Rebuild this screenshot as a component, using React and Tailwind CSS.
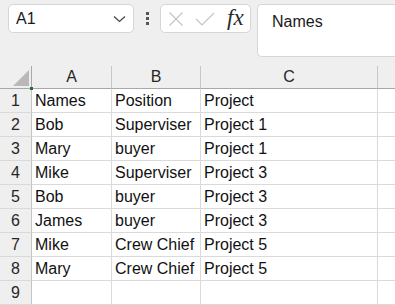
import React from 'react';

const rows = [
  ['Names', 'Position', 'Project'],
  ['Bob', 'Superviser', 'Project 1'],
  ['Mary', 'buyer', 'Project 1'],
  ['Mike', 'Superviser', 'Project 3'],
  ['Bob', 'buyer', 'Project 3'],
  ['James', 'buyer', 'Project 3'],
  ['Mike', 'Crew Chief', 'Project 5'],
  ['Mary', 'Crew Chief', 'Project 5'],
  ['', '', ''],
];

const gridCols = 'grid grid-cols-[32px_80px_89px_177px_1fr]';

function Toolbar() {
  return (
    <div className="flex items-start pt-[4px] h-[66px]">
      {/* name box */}
      <div className="ml-[8px] w-[126px] h-[29px] bg-white border border-[#d6d6d6] rounded-[5px] flex items-center justify-between pl-[7px] pr-[6px]">
        <span className="text-[16px] text-[#1a1a1a]">A1</span>
        <svg width="13" height="8" viewBox="0 0 13 8" className="mr-[1px]">
          <polyline points="1,1.5 6.5,6.5 12,1.5" fill="none" stroke="#444" strokeWidth="1.2" />
        </svg>
      </div>
      {/* dots */}
      <div className="w-[26px] h-[29px] flex flex-col items-center justify-center gap-[2px]">
        <span className="w-[3px] h-[3px] bg-[#555]" />
        <span className="w-[3px] h-[3px] bg-[#555]" />
        <span className="w-[3px] h-[3px] bg-[#555]" />
      </div>
      {/* cancel / enter / fx */}
      <div className="w-[91px] h-[29px] bg-white border border-[#d6d6d6] rounded-[5px] flex items-center pl-[7px]">
        <svg width="16" height="16" viewBox="0 0 16 16">
          <path d="M1.5 1.5 L14.5 14.5 M14.5 1.5 L1.5 14.5" stroke="#c4c4c4" strokeWidth="1.2" fill="none" />
        </svg>
        <svg width="20" height="14" viewBox="0 0 20 14" className="ml-[11px]">
          <polyline points="1,7 7,13 19,1" fill="none" stroke="#c4c4c4" strokeWidth="1.2" />
        </svg>
        <span className="ml-[12px] text-[23px] italic leading-none text-[#2b2b2b] font-['Liberation_Serif',serif] -mt-[3px]">fx</span>
      </div>
      {/* formula bar */}
      <div className="ml-[6px] flex-1 h-[53px] bg-white border border-[#d6d6d6] rounded-l-[5px] border-r-0 pl-[14px] pt-[5px]">
        <span className="text-[16px] text-[#1a1a1a]">Names</span>
      </div>
    </div>
  );
}

function Corner() {
  return (
    <div className="relative h-[23px] border-r border-b border-[#a8a8a8] bg-[#efefef]">
      <svg width="18" height="17" viewBox="0 0 18 17" className="absolute left-[12px] top-[4px]">
        <polygon points="17,0 17,16 1,16" fill="#b9b9b9" />
      </svg>
      <span className="absolute right-[-2px] bottom-[-2px] w-[3px] h-[3px] bg-[#1e7145]" />
    </div>
  );
}

function App() {
  return (
    <div className="w-[395px] h-[305px] overflow-hidden bg-[#efefef] font-['Liberation_Sans',Arial,sans-serif]">
      <Toolbar />
      <div className={gridCols}>
        <Corner />
        {['A', 'B', 'C', ''].map((c, i) => (
          <div
            key={i}
            className={`h-[23px] border-b border-[#a8a8a8] flex items-center justify-center text-[16px] text-[#262626] ${i < 3 ? 'border-r-[1px] border-r-[#c8c8c8]' : ''}`}
          >
            {c}
          </div>
        ))}
      </div>
      {rows.map((r, ri) => (
        <div key={ri} className={gridCols}>
          <div className="h-[24px] border-r border-b border-r-[#c4c4c4] border-b-[#d9d9d9] flex items-center justify-center text-[16px] text-[#262626]">
            {ri + 1}
          </div>
          {r.map((v, ci) => (
            <div
              key={ci}
              className="h-[24px] bg-white border-r border-b border-[#dadada] flex items-center pl-[3px] text-[16px] text-[#111] whitespace-nowrap"
            >
              {v}
            </div>
          ))}
          <div className="h-[24px] bg-white border-b border-[#dadada]" />
        </div>
      ))}
    </div>
  );
}

export default App;
